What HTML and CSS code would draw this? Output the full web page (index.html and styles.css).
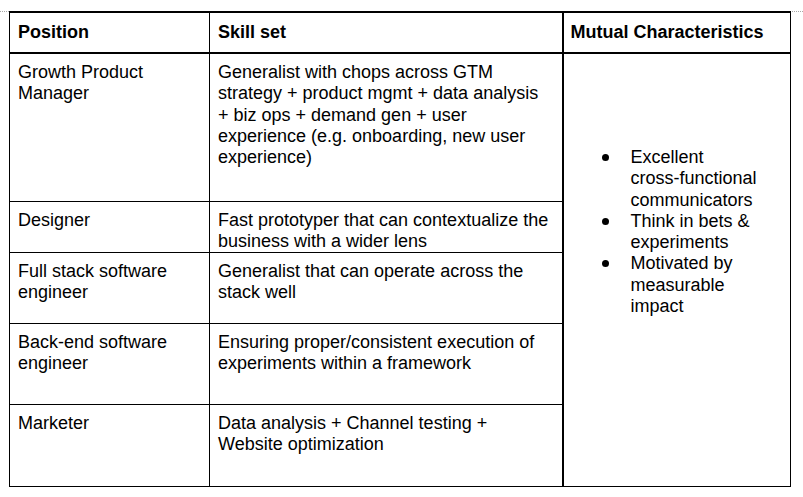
FILE: index.html
```html
<!DOCTYPE html>
<html>
<head>
<meta charset="utf-8">
<link rel="stylesheet" href="styles.css">
</head>
<body>
<div class="page">
  <div class="rule"></div>
  <table class="grid">
    <colgroup>
      <col class="c1">
      <col class="c2">
      <col class="c3">
    </colgroup>
    <thead>
      <tr class="head">
        <th>Position</th>
        <th>Skill set</th>
        <th class="mutual">Mutual Characteristics</th>
      </tr>
    </thead>
    <tbody>
      <tr class="r1">
        <td>Growth Product Manager</td>
        <td>Generalist with chops across GTM strategy + product mgmt + data analysis + biz ops + demand gen + user experience (e.g. onboarding, new user experience)</td>
        <td class="mutual merged" rowspan="5">
          <ul class="bullets">
            <li><span class="txt">Excellent <span class="nowrap">cross-functional</span> communicators</span></li>
            <li><span class="txt">Think in bets &amp; experiments</span></li>
            <li><span class="txt">Motivated by measurable impact</span></li>
          </ul>
        </td>
      </tr>
      <tr class="r2">
        <td>Designer</td>
        <td>Fast prototyper that can contextualize the business with a wider lens</td>
      </tr>
      <tr class="r3">
        <td>Full stack software engineer</td>
        <td>Generalist that can operate across the stack well</td>
      </tr>
      <tr class="r4">
        <td>Back-end software engineer</td>
        <td>Ensuring proper/consistent execution of experiments within a framework</td>
      </tr>
      <tr class="r5">
        <td>Marketer</td>
        <td>Data analysis + Channel testing + Website optimization</td>
      </tr>
    </tbody>
  </table>
</div>
</body>
</html>
```

FILE: styles.css
```css
html, body {
  margin: 0;
  padding: 0;
  background: #fff;
}

.page {
  padding-top: 11px;
  font-family: "Liberation Sans", Arial, sans-serif;
  font-size: 18px;
  line-height: 21.3px;
  color: #000;
}

.rule {
  height: 0;
  border-top: 1px dotted #a8a8a8;
}

.grid {
  margin-top: -1px;
  margin-left: 9px;
  width: 781px;
  border-collapse: collapse;
  table-layout: fixed;
  border-top: 2px solid #000;
}

.c1 { width: 200px; }
.c2 { width: 353px; }
.c3 { width: 228px; }

.grid th,
.grid td {
  border: 1px solid #000;
  padding: 8px 8px 0 8px;
  vertical-align: top;
  text-align: left;
}

.grid th {
  font-weight: bold;
}

.head th {
  height: 41px;
  padding-top: 9px;
  box-sizing: border-box;
  border-bottom: 2px solid #000;
  border-top: 2px solid #000;
}

.grid .mutual {
  border-left: 2px solid #000;
  padding-left: 7px;
}

.r1 td { height: 148px; box-sizing: border-box; }
.r2 td { height: 51px; box-sizing: border-box; }
.r3 td { height: 71px; box-sizing: border-box; }
.r4 td { height: 81px; box-sizing: border-box; }
.r5 td { height: 82px; box-sizing: border-box; }

.grid .merged {
  padding-top: 93px;
  height: auto;
}

.bullets {
  list-style: none;
  margin: 0;
  padding: 0;
}

.bullets li {
  display: flex;
  align-items: flex-start;
}

.txt {
  flex: 1;
  min-width: 0;
}

.nowrap {
  white-space: nowrap;
}

.bullets li::before {
  content: "";
  flex: none;
  width: 7px;
  height: 7px;
  border-radius: 50%;
  background: #000;
  margin: 7px 22px 0 31px;
}
```
